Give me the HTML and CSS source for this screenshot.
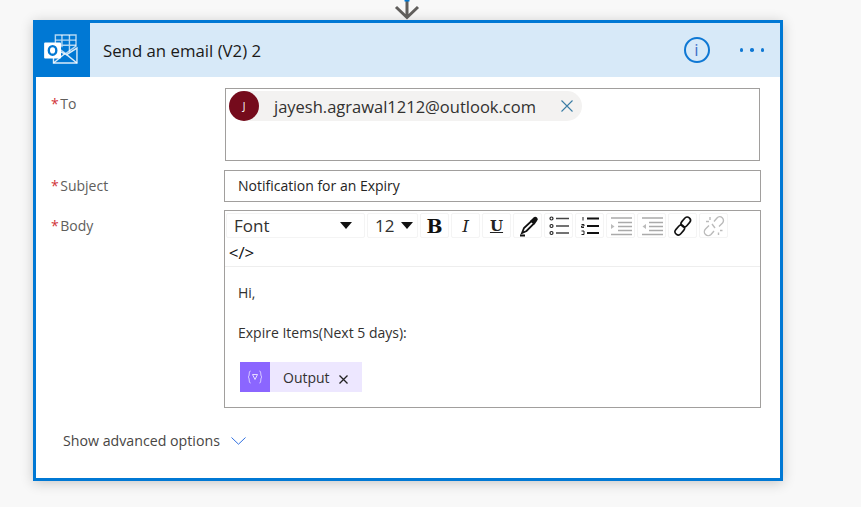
FILE: index.html
```html
<!DOCTYPE html>
<html lang="en">
<head>
<meta charset="utf-8">
<title>Send an email (V2) 2</title>
<link rel="stylesheet" href="styles.css">
</head>
<body>
<div class="connector">
  <svg width="30" height="20" viewBox="0 0 30 20"><path d="M15 1V17M4 7L15 17.500L26 7" fill="none" stroke="#605e5c" stroke-width="3"/><path d="M12.500 0H17.500V1.500H12.500Z" fill="#0078d4"/></svg>
</div>
<section class="card">
  <header class="head">
    <div class="logo">
      <svg class="logo-mark" width="34" height="30" viewBox="0 0 36 32">
        <path d="M12 1H34V13L23 21L12 13Z" fill="none" stroke="#fff" stroke-opacity=".7" stroke-width="1.500"/>
        <path d="M12 6.500H34M19 1V14M27 1V19M12 12H34" stroke="#fff" stroke-opacity=".7" stroke-width="1.500" fill="none"/>
        <path d="M10 15.500V31H35V15L24 22Z" fill="#0078d4" stroke="#fff" stroke-opacity=".85" stroke-width="1.500"/>
        <path d="M10 31L22 21M35 31L24 22" stroke="#fff" stroke-opacity=".85" stroke-width="1.500" fill="none"/>
        <rect x="0" y="9" width="18" height="17" rx="1" fill="#fff"/>
        <ellipse cx="9" cy="17.500" rx="4" ry="4.600" fill="none" stroke="#0078d4" stroke-width="2.500"/>
      </svg>
    </div>
    <h1 class="title">Send an email (V2) 2</h1>
    <div class="info">i</div>
    <div class="more"><span></span><span></span><span></span></div>
  </header>
  <div class="form">
    <div class="row row-to">
      <label class="label"><span class="req">*</span>To</label>
      <div class="box box-to">
        <div class="pill">
          <span class="avatar">J</span>
          <span class="mail">jayesh.agrawal1212@outlook.com</span>
          <svg class="pill-x" width="12" height="12" viewBox="0 0 12 12"><path d="M.500 .500L11.500 11.500M11.500 .500L.500 11.500" stroke="#3a7ca5" stroke-width="1.100" fill="none"/></svg>
        </div>
      </div>
    </div>
    <div class="row row-subject">
      <label class="label"><span class="req">*</span>Subject</label>
      <div class="box box-subject">Notification for an Expiry</div>
    </div>
    <div class="row">
      <label class="label"><span class="req">*</span>Body</label>
      <div class="box box-body">
        <div class="toolbar">
          <div class="tool tool-font"><span>Font</span><i class="caret"></i></div>
          <div class="tool tool-size"><span>12</span><i class="caret"></i></div>
          <div class="tool tool-b">B</div>
          <div class="tool tool-i">I</div>
          <div class="tool tool-u">U</div>
          <div class="tool">
            <svg width="22" height="22" viewBox="0 0 22 22"><path d="M5 18L7 13L14.500 6L17 8.500L9.500 16Z" fill="none" stroke="#111" stroke-width="1.800"/><path d="M13 6L16.500 2.500A2 2 0 0 1 20 6L17.500 9.500Z" fill="#111"/><path d="M3 20.500H8" stroke="#111" stroke-width="2"/></svg>
          </div>
          <div class="tool">
            <svg width="24" height="22" viewBox="0 0 24 22"><g fill="none" stroke="#222" stroke-width="1.200"><circle cx="4.500" cy="3.500" r="1.500"/><circle cx="4.500" cy="11" r="1.500"/><circle cx="4.500" cy="18" r="1.500"/></g><path d="M9 3.500H22M9 11H22M9 18H22" stroke="#444" stroke-width="1.300"/></svg>
          </div>
          <div class="tool">
            <svg width="24" height="22" viewBox="0 0 24 22"><path d="M5 2V5.500M3.500 9.500H6V11H3.500V12.500H6M3.500 16H6V19.500H3.500" stroke="#222" stroke-width="1" fill="none"/><path d="M9 3.500H21M9 11H21M9 18H21" stroke="#111" stroke-width="1.800"/></svg>
          </div>
          <div class="tool">
            <svg width="24" height="22" viewBox="0 0 24 22"><path d="M2 3H23M9 7.500H23M9 11.500H23M9 15.500H23M2 19.500H23" stroke="#aaa" stroke-width="1.400"/><path d="M2 9L5.500 11.500L2 14Z" fill="#bbb"/></svg>
          </div>
          <div class="tool">
            <svg width="24" height="22" viewBox="0 0 24 22"><path d="M2 3H23M9 7.500H23M9 11.500H23M9 15.500H23M2 19.500H23" stroke="#aaa" stroke-width="1.400"/><path d="M6 9L2.500 11.500L6 14Z" fill="#bbb"/></svg>
          </div>
          <div class="tool">
            <svg width="24" height="22" viewBox="0 0 24 22"><g fill="none" stroke="#111" stroke-width="1.600"><rect x="11.500" y="1.500" width="6.500" height="11" rx="3.250" transform="rotate(40 14.750 7)"/><rect x="5.500" y="9.500" width="6.500" height="11" rx="3.250" transform="rotate(40 8.750 15)"/></g></svg>
          </div>
          <div class="tool">
            <svg width="24" height="22" viewBox="0 0 24 22"><g fill="none" stroke="#bbb" stroke-width="1.400"><path d="M12 6.500L15 3A3.600 3.600 0 0 1 20.500 8L17 11.500"/><path d="M12 16L9 19.500A3.600 3.600 0 0 1 3.500 14L7 10.500"/><path d="M8 2V5M4 6.500H7M16.500 20V17.500M20.500 15.500H18M10 9L13 13"/></g></svg>
          </div>
          <div class="tool tool-code">&lt;/&gt;</div>
        </div>
        <div class="editor">
          <p class="line">Hi,</p>
          <p class="line">Expire Items(Next 5 days):</p>
          <div class="token">
            <span class="token-icon">
              <svg width="16" height="14" viewBox="0 0 16 14"><g fill="none" stroke="#e6dcff" stroke-width="1"><path d="M3.500 1C1.500 1 3 6 1 7C3 8 1.500 13 3.500 13M12.500 1C14.500 1 13 6 15 7C13 8 14.500 13 12.500 13"/><path d="M5.500 4.500H10.500L8 9.500Z"/></g></svg>
            </span>
            <span class="token-name">Output</span>
            <svg class="token-x" width="9" height="9" viewBox="0 0 9 9"><path d="M.500 .500L8.500 8.500M8.500 .500L.500 8.500" stroke="#222" stroke-width="1.300" fill="none"/></svg>
          </div>
        </div>
      </div>
    </div>
    <div class="advanced">
      <span>Show advanced options</span>
      <svg width="15" height="8" viewBox="0 0 15 8"><path d="M.500 .500L7.500 7.200L14.500 .500" fill="none" stroke="#2f6fe0" stroke-width="1"/></svg>
    </div>
  </div>
</section>
</body>
</html>
```

FILE: styles.css
```css
* { box-sizing: border-box; }
html, body { margin: 0; height: 507px; overflow: hidden; }
body {
  background: #f8f8f8;
  font-family: "Open Sans", "Noto Sans", sans-serif;
  color: #323130;
  padding-left: 33px;
}
.connector { height: 20px; width: 748px; display: flex; justify-content: center; }
.connector svg { display: block; }
.card {
  width: 750px;
  height: 461px;
  background: #fff;
  border: 3px solid #0078d4;
  box-shadow: 0 2px 12px rgba(0,0,0,.2);
}
.head { height: 54px; background: #d7e9f8; display: flex; align-items: center; }
.logo {
  width: 54px; height: 54px; background: #0078d4;
  display: flex; align-items: center; justify-content: center;
}
.logo-mark { margin: 0 4px 2px 0; }
.title { margin: 0 0 0 13px; font-size: 16.800px; font-weight: 400; color: #1b1a19; flex: 1; }
.info {
  width: 26px; height: 26px; border: 2px solid #0f78d4; border-radius: 50%;
  color: #3f6fc9; font-size: 17px; line-height: 21px; text-align: center;
  margin-right: 30px;
}
.more { display: flex; gap: 7px; margin-right: 16px; }
.more span { width: 3.500px; height: 3.500px; border-radius: 50%; background: #0f78d4; }
.form { padding: 11px 19px 0 15px; }
.row { display: flex; margin-bottom: 8px; }
.row-to { margin-bottom: 9px; }
.label { width: 173px; font-size: 14px; color: #605e5c; line-height: 20px; padding-top: 6px; flex: none; }
.req { color: #d13438; margin-right: 1.500px; }
.box { flex: 1; border: 1px solid #a19f9d; }
.box-to { height: 73px; margin: 0 1px; padding: 2px 3px; }
.box-subject { height: 32px; font-size: 14px; line-height: 30px; padding-left: 13px; color: #252423; }
.box-body { height: 198px; }
.pill {
  display: inline-flex; align-items: center; height: 30px; border-radius: 15px;
  background: #f3f2f1; width: 353px;
}
.avatar {
  width: 30px; height: 30px; border-radius: 50%; background: #750b1c; color: #fff;
  font-size: 10px; line-height: 30px; text-align: center; flex: none;
}
.mail { font-size: 16.500px; margin-left: 15px; color: #323130; white-space: nowrap; flex: 1; }
.pill-x { margin-right: 9px; flex: none; }
.toolbar {
  display: flex; flex-wrap: wrap; align-items: flex-start; height: 56px;
  border-bottom: 1px solid #eee; padding: 2px 26px 0 1px; column-gap: 2px;
}
.tool {
  height: 25px; width: 29px; padding: 0; display: flex; align-items: center; justify-content: center;
  background: #fff; border: 1px solid #f4f4f4; border-radius: 2px; color: #222;
}
.tool-font { width: 139px; justify-content: space-between; padding: 0 12px 0 7px; font-size: 17px; color: #323130; }
.tool-size { width: 51px; justify-content: space-between; padding: 0 4px 0 7px; font-size: 17px; color: #323130; }
.caret { width: 0; height: 0; border: 6.500px solid transparent; border-top: 7px solid #111; border-bottom: 0; }
.tool-b { font-family: "DejaVu Serif", serif; font-weight: 700; font-size: 19px; color: #111; }
.tool-i { font-family: "DejaVu Serif", serif; font-style: italic; font-size: 17px; }
.tool-u { font-family: "DejaVu Serif", serif; font-size: 15px; font-weight: 700; text-decoration: underline; }
.tool-code { border: 0; width: 29px; font-size: 17px; background: transparent; color: #111; margin: 1px 0 0 1px; }
.editor { padding: 16px 0 0 13px; }
.line { margin: 0 0 20px; font-size: 14px; line-height: 20px; color: #323130; }
.token { display: flex; align-items: center; height: 30px; width: 122px; margin: -1px 0 0 2px; background: #ede7ff; }
.token-icon { width: 30px; height: 30px; background: #8b66ff; display: flex; align-items: center; justify-content: center; }
.token-name { font-size: 14px; margin-left: 13px; color: #323130; }
.token-x { margin-left: 9px; margin-top: 4px; }
.advanced { display: flex; align-items: center; gap: 11px; margin: 23px 0 0 12px; font-size: 14.200px; color: #484644; }
```
